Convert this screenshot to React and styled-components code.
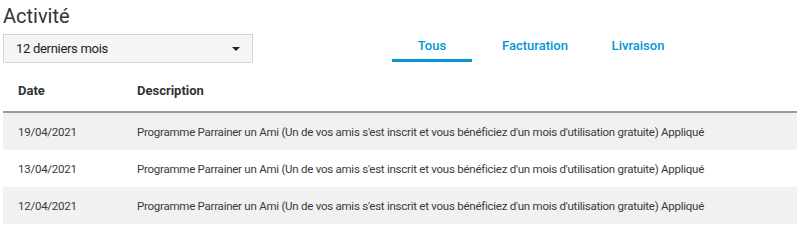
import React from "react";
import styled, { createGlobalStyle } from "styled-components";

const Global = createGlobalStyle`
  body {
    margin: 0;
    background: #fff;
    font-family: Roboto, "Liberation Sans", sans-serif;
    color: #333;
  }
`;

const Page = styled.div`
  padding: 3px 3px 0 3px;
`;

const Title = styled.h2`
  margin: 0;
  font-size: 20px;
  font-weight: normal;
  line-height: 27px;
  color: #333;
`;

const Toolbar = styled.div`
  display: flex;
  align-items: center;
  margin-top: 4px;
  height: 29px;
`;

const Select = styled.div`
  width: 250px;
  height: 29px;
  box-sizing: border-box;
  border: 1px solid #d4d4d4;
  background: #f5f5f5;
  display: flex;
  align-items: center;
  justify-content: space-between;
  padding: 0 12px 0 12px;
  font-size: 13px;
  letter-spacing: -0.3px;
  color: #222;
`;

const Caret = styled.span`
  width: 0;
  height: 0;
  border-left: 4px solid transparent;
  border-right: 4px solid transparent;
  border-top: 4px solid #222;
`;

const Tabs = styled.div`
  display: flex;
  margin-left: 139px;
  align-self: stretch;
`;

const Tab = styled.div`
  width: ${(p) => p.w}px;
  text-align: center;
  font-size: 13px;
  font-weight: 500;
  color: #0096d6;
  box-sizing: border-box;
  padding-top: 4px;
  border-bottom: 3px solid ${(p) => (p.active ? "#0096d6" : "transparent")};
  height: 28px;
`;

const Table = styled.div`
  margin-top: 0;
`;

const Row = styled.div`
  display: grid;
  grid-template-columns: 119px 1fr;
  align-items: center;
  height: ${(p) => (p.head ? 50 : 37)}px;
  padding-left: 15px;
  font-size: 11.5px;
  letter-spacing: -0.25px;
  color: #3a3a3a;
  background: ${(p) => (p.shade ? "#f1f1f1" : "#fff")};
  border-bottom: ${(p) => (p.head ? "2px solid #9a9a9a" : "none")};
  box-sizing: border-box;
  ${(p) =>
    p.head &&
    "padding-top: 7px; font-weight: bold; font-size: 13px; letter-spacing: 0; color: #333;"}
`;

const rows = ["19/04/2021", "13/04/2021", "12/04/2021"];
const desc =
  "Programme Parrainer un Ami (Un de vos amis s'est inscrit et vous bénéficiez d'un mois d'utilisation gratuite) Appliqué";

export default function App() {
  return (
    <Page>
      <Global />
      <Title>Activité</Title>
      <Toolbar>
        <Select>
          12 derniers mois
          <Caret />
        </Select>
        <Tabs>
          <Tab w={80} active>Tous</Tab>
          <Tab w={126}>Facturation</Tab>
          <Tab w={80}>Livraison</Tab>
        </Tabs>
      </Toolbar>
      <Table>
        <Row head>
          <span>Date</span>
          <span>Description</span>
        </Row>
        {rows.map((d, i) => (
          <Row key={d} shade={i % 2 === 0}>
            <span>{d}</span>
            <span>{desc}</span>
          </Row>
        ))}
      </Table>
    </Page>
  );
}
